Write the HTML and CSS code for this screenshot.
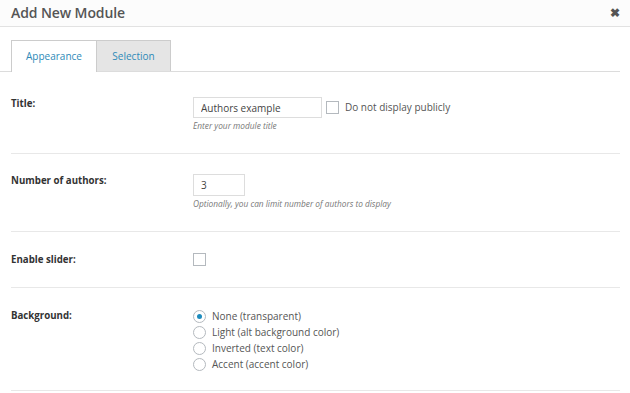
FILE: index.html
```html
<!DOCTYPE HTML>
<html>
<head>
  <meta charset="utf-8">
  <meta name="viewport" content="width=device-width" />
  <title>Add New Module</title>
  <link rel="stylesheet" href="styles.css">
</head>

<body>
  <div class="modal">
    <header class="modal-header">
      <h1 class="modal-title">Add New Module</h1>
      <a class="modal-close" href="#">&#10006;</a>
    </header>

    <nav class="tabs">
      <a class="tab active" href="#">Appearance</a>
      <a class="tab" href="#">Selection</a>
    </nav>

    <div class="form">
      <div class="row row--first">
        <label class="row-label">Title:</label>
        <div class="row-field">
          <div class="inline">
            <input class="text-input text-input--wide" type="text" value="Authors example">
            <span class="checkbox"></span>
            <span class="inline-label">Do not display publicly</span>
          </div>
          <p class="hint">Enter your module title</p>
        </div>
      </div>

      <div class="row row--number">
        <label class="row-label">Number of authors:</label>
        <div class="row-field">
          <input class="text-input text-input--small" type="text" value="3">
          <p class="hint">Optionally, you can limit number of authors to display</p>
        </div>
      </div>

      <div class="row row--slider">
        <label class="row-label">Enable slider:</label>
        <div class="row-field">
          <span class="checkbox"></span>
        </div>
      </div>

      <div class="row row--bg">
        <label class="row-label">Background:</label>
        <div class="row-field">
          <div class="radio-option"><span class="radio checked"></span>None (transparent)</div>
          <div class="radio-option"><span class="radio"></span>Light (alt background color)</div>
          <div class="radio-option"><span class="radio"></span>Inverted (text color)</div>
          <div class="radio-option"><span class="radio"></span>Accent (accent color)</div>
        </div>
      </div>
    </div>
  </div>
</body>
</html>
```

FILE: styles.css
```css
body {
  margin: 0;
  background-color: white;
  color: #444;
  font-family: "Open Sans", "Noto Sans", sans-serif;
  line-height: 1.3;
}

p, h1 {
  margin: 0;
}

:root {
  --primary: #0073aa;
  --border: #ddd;
}

.modal {
  width: 630px;
  height: 393px;
  overflow: hidden;
}

.modal-header {
  display: flex;
  justify-content: space-between;
  align-items: center;
  height: 26px;
  padding: 0 10px 0 11px;
  border-bottom: 1px solid #e2e2e2;
  background-color: #fcfcfc;
}

.modal-title {
  color: #555;
  font-size: 14px;
  font-weight: 600;
  letter-spacing: -0.1px;
}

.modal-close {
  color: #555;
  font-size: 12px;
  font-weight: bold;
  text-decoration: none;
}

.tabs {
  display: flex;
  width: 620px;
  padding: 13px 0 0 11px;
  box-sizing: border-box;
  border-bottom: 1px solid #dcdcdc;
}

.tab {
  display: flex;
  align-items: center;
  justify-content: center;
  height: 30px;
  margin-bottom: -1px;
  border: 1px solid #ccc;
  border-bottom: none;
  background-color: #e5e5e5;
  color: #2e8ab8;
  font-size: 10px;
  text-decoration: none;
}

.tab:first-child {
  width: 84px;
  background-color: white;
  height: 31px;
}

.tab:nth-child(2) {
  width: 73px;
  border-left: none;
}

.form {
  width: 609px;
  margin-left: 11px;
}

.row {
  display: flex;
  border-bottom: 1px solid #e8e8e8;
}

.row--first {
  padding: 25px 0 21px;
}

.row--number {
  padding: 20px 0 21px;
}

.row--slider {
  padding: 21px 0 20px;
}

.row--bg {
  padding: 21px 0 17px;
}

.row-label {
  width: 182px;
  padding-top: 1px;
  color: #333;
  font-size: 9.7px;
  font-weight: 700;
}

.row-field {
  display: flex;
  flex-direction: column;
  align-items: flex-start;
}

.inline {
  display: flex;
  align-items: center;
}

.text-input {
  box-sizing: border-box;
  height: 21px;
  padding: 0 7px;
  border: 1px solid #ddd;
  color: #444;
  font-family: inherit;
  font-size: 10px;
  outline: none;
}

.text-input--wide {
  width: 129px;
}

.text-input--small {
  width: 52px;
  height: 22px;
}

.checkbox {
  display: block;
  box-sizing: border-box;
  width: 13px;
  height: 13px;
  border: 1px solid #b4b9be;
  background-color: white;
}

.inline .checkbox {
  margin-left: 4px;
}

.inline-label {
  margin-left: 6px;
  font-size: 10px;
  color: #555;
}

.hint {
  margin-top: 2px;
  color: #777;
  font-size: 8.3px;
  font-style: italic;
  line-height: 12px;
}

.radio-option {
  display: flex;
  align-items: center;
  height: 16px;
  color: #555;
  font-size: 10px;
}

.radio {
  position: relative;
  box-sizing: border-box;
  width: 13px;
  height: 13px;
  margin-right: 6px;
  border: 1px solid #b4b9be;
  border-radius: 50%;
}

.radio.checked::after {
  content: "";
  position: absolute;
  top: 3px;
  left: 3px;
  width: 5px;
  height: 5px;
  border-radius: 50%;
  background-color: #1e8cbe;
}
```
